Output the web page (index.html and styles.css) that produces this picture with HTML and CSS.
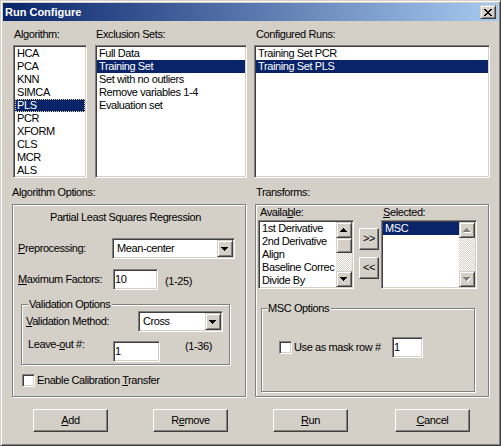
FILE: index.html
```html
<!DOCTYPE html>
<html>
<head>
<meta charset="utf-8">
<title>Run Configure</title>
<link rel="stylesheet" href="styles.css">
</head>
<body>
<div class="window">
  <div class="titlebar">
    <span class="title">Run Configure</span>
    <div class="close raised"><svg width="8" height="7" viewBox="0 0 8 7" shape-rendering="crispEdges"><path fill="#000" d="M0 0h2v1H0z M6 0h2v1H6z M1 1h2v1H1z M5 1h2v1H5z M2 2h4v1H2z M3 3h2v1H3z M2 4h4v1H2z M1 5h2v1H1z M5 5h2v1H5z M0 6h2v1H0z M6 6h2v1H6z"/></svg></div>
  </div>

  <div class="top">
    <div class="col col-alg">
      <div class="lbl">Algorithm:</div>
      <div class="field list">
        <div class="item">HCA</div>
        <div class="item">PCA</div>
        <div class="item">KNN</div>
        <div class="item">SIMCA</div>
        <div class="item sel focus">PLS</div>
        <div class="item">PCR</div>
        <div class="item">XFORM</div>
        <div class="item">CLS</div>
        <div class="item">MCR</div>
        <div class="item">ALS</div>
      </div>
    </div>
    <div class="col col-exc">
      <div class="lbl">Exclusion Sets:</div>
      <div class="field list">
        <div class="item">Full Data</div>
        <div class="item sel">Training Set</div>
        <div class="item">Set with no outliers</div>
        <div class="item">Remove variables 1-4</div>
        <div class="item">Evaluation set</div>
      </div>
    </div>
    <div class="col col-runs">
      <div class="lbl lbl2">Configured Runs:</div>
      <div class="field list">
        <div class="item">Training Set PCR</div>
        <div class="item sel">Training Set PLS</div>
      </div>
    </div>
  </div>

  <div class="mid">
    <div class="side">
      <div class="sec">Algorithm Options:</div>
      <div class="group etched">
        <div class="pls-title">Partial Least Squares Regression</div>
        <div class="frow row-pre">
          <span class="flbl w94"><u>P</u>reprocessing:</span>
          <div class="field combo w123">
            <span class="ctext">Mean-center</span>
            <span class="dd raised"><svg width="14" height="15" viewBox="0 0 14 15" shape-rendering="crispEdges"><path fill="#000" d="M3 6h7v1H3z M4 7h5v1H4z M5 8h3v1H5z M6 9h1v1H6z"/></svg></span>
          </div>
        </div>
        <div class="frow row-max">
          <span class="flbl w95"><u>M</u>aximum Factors:</span>
          <div class="field edit w45">10</div>
          <span class="range1">(1-25)</span>
        </div>
        <div class="frame etched frame-val">
          <span class="legend">Validation Options</span>
          <div class="frow row-vm">
            <span class="flbl w112"><u>V</u>alidation Method:</span>
            <div class="field combo w85">
              <span class="ctext">Cross</span>
              <span class="dd raised"><svg width="14" height="15" viewBox="0 0 14 15" shape-rendering="crispEdges"><path fill="#000" d="M3 6h7v1H3z M4 7h5v1H4z M5 8h3v1H5z M6 9h1v1H6z"/></svg></span>
            </div>
          </div>
          <div class="frow row-lo">
            <span class="flbl w85">Leave-<u>o</u>ut #:</span>
            <div class="field edit w47">1</div>
            <span class="range2">(1-36)</span>
          </div>
        </div>
        <div class="frow check-row">
          <span class="field cb"></span>
          <span class="cb-text">Enable Calibration <u>T</u>ransfer</span>
        </div>
      </div>
    </div>

    <div class="side side-r">
      <div class="sec">Transforms:</div>
      <div class="group etched group-r">
        <div class="tr">
          <div class="tcol">
            <div class="lbl tl">Availa<u>b</u>le:</div>
            <div class="field tlist">
              <div class="items">
                <div class="item">1st Derivative</div>
                <div class="item">2nd Derivative</div>
                <div class="item">Align</div>
                <div class="item">Baseline Correc</div>
                <div class="item">Divide By</div>
              </div>
              <div class="sb">
                <span class="sbtn raised"><svg width="14" height="14" viewBox="0 0 14 14" shape-rendering="crispEdges"><path fill="#000" d="M6 5h1v1H6z M5 6h3v1H5z M4 7h5v1H4z M3 8h7v1H3z"/></svg></span>
                <span class="thumb raised"></span>
                <span class="track"></span>
                <span class="sbtn raised"><svg width="14" height="14" viewBox="0 0 14 14" shape-rendering="crispEdges"><path fill="#000" d="M3 5h7v1H3z M4 6h5v1H4z M5 7h3v1H5z M6 8h1v1H6z"/></svg></span>
              </div>
            </div>
          </div>
          <div class="arrows">
            <span class="pbtn small">&gt;&gt;</span>
            <span class="pbtn small">&lt;&lt;</span>
          </div>
          <div class="tcol tcol-sel">
            <div class="lbl tl"><u>S</u>elected:</div>
            <div class="field tlist">
              <div class="items">
                <div class="item sel">MSC</div>
              </div>
              <div class="sb">
                <span class="sbtn raised"><svg width="14" height="14" viewBox="0 0 14 14" shape-rendering="crispEdges"><path fill="#fff" d="M7 6h1v1H7z M6 7h3v1H6z M5 8h5v1H5z M4 9h7v1H4z"/><path fill="#808080" d="M6 5h1v1H6z M5 6h3v1H5z M4 7h5v1H4z M3 8h7v1H3z"/></svg></span>
                <span class="track"></span>
                <span class="sbtn raised"><svg width="14" height="14" viewBox="0 0 14 14" shape-rendering="crispEdges"><path fill="#fff" d="M4 6h7v1H4z M5 7h5v1H5z M6 8h3v1H6z M7 9h1v1H7z"/><path fill="#808080" d="M3 5h7v1H3z M4 6h5v1H4z M5 7h3v1H5z M6 8h1v1H6z"/></svg></span>
              </div>
            </div>
          </div>
        </div>
        <div class="frame etched frame-msc">
          <span class="legend">MSC Options</span>
          <div class="frow msc-row">
            <span class="field cb"></span>
            <span class="cb-text msc-text">Use as mask row #</span>
            <div class="field edit w31">1</div>
          </div>
        </div>
      </div>
    </div>
  </div>

  <div class="btns">
    <span class="pbtn wide"><u>A</u>dd</span>
    <span class="pbtn wide gap45">R<u>e</u>move</span>
    <span class="pbtn wide gap45"><u>R</u>un</span>
    <span class="pbtn wide gap47"><u>C</u>ancel</span>
  </div>
</div>
</body>
</html>
```

FILE: styles.css
```css
* { box-sizing: border-box; }
html, body { margin: 0; padding: 0; background: #D4D0C8; }
body {
  font-family: "Liberation Sans", Arial, sans-serif;
  font-size: 11px;
  line-height: 13px;
  letter-spacing: -0.4px;
  color: #000;
}
u { text-decoration: underline; }
svg { display: block; }

.window {
  width: 501px;
  height: 446px;
  border: 1px solid;
  border-color: #D4D0C8 #404040 #404040 #D4D0C8;
  box-shadow: inset 1px 1px 0 #fff, inset -1px -1px 0 #808080;
  padding: 2px;
  background: #D4D0C8;
}

.titlebar {
  height: 18px;
  display: flex;
  background: linear-gradient(to right, #0A246A, #A6CAF0);
}
.title {
  color: #fff;
  font-weight: bold;
  letter-spacing: 0;
  line-height: 18px;
  padding-left: 2px;
}
.raised {
  background: #D4D0C8;
  border: 1px solid;
  border-color: #D4D0C8 #404040 #404040 #D4D0C8;
  box-shadow: inset 1px 1px 0 #fff, inset -1px -1px 0 #808080;
}
.close {
  margin: 2px 2px 0 auto;
  width: 16px;
  height: 14px;
  padding: 3px 0 0 3px;
}

.field {
  background: #fff;
  border: 1px solid;
  border-color: #808080 #fff #fff #808080;
  box-shadow: inset 1px 1px 0 #404040, inset -1px -1px 0 #D4D0C8;
}

/* top lists */
.top { display: flex; margin-top: 7px; padding-left: 10px; }
.col-alg { width: 74px; }
.col-exc { width: 152px; margin-left: 8px; }
.col-runs { width: 236px; margin-left: 7px; }
.lbl { height: 13px; padding-left: 1px; white-space: nowrap; }
.lbl2 { padding-left: 2px; }
.list { margin-top: 4px; height: 133px; padding: 1px; overflow: hidden; }
.item { height: 13px; padding-left: 2px; white-space: nowrap; overflow: hidden; }
.sel { background: #0A246A; color: #fff; }
.focus { outline: 1px dotted #F5DB95; outline-offset: -1px; }

/* middle */
.mid { display: flex; margin-top: 8px; padding-left: 9px; }
.side { width: 235px; }
.side-r { margin-left: 8px; }
.sec { height: 13px; white-space: nowrap; }
.side-r .sec { padding-left: 1px; }
.etched {
  border: 1px solid #808080;
  box-shadow: inset 1px 1px 0 #fff, 1px 1px 0 #fff;
}
.group { margin-top: 5px; width: 234px; height: 193px; }

.pls-title { margin-top: 6px; padding-right: 7px; height: 13px; text-align: center; white-space: nowrap; }
.frow { display: flex; align-items: center; }
.flbl { white-space: nowrap; }
.w94 { width: 94px; }
.w95 { width: 95px; }
.w112 { width: 112px; }
.w85 { width: 85px; }
.w123 { width: 123px; }
.w45 { width: 45px; }
.w47 { width: 47px; }
.w31 { width: 31px; }

.combo { height: 21px; display: flex; padding: 1px; }
.combo .ctext { flex: 1; padding-left: 3px; line-height: 17px; white-space: nowrap; }
.dd { width: 16px; height: 17px; }
.edit { height: 21px; padding: 0 0 0 1px; line-height: 19px; }

.row-pre { margin-top: 14px; padding-left: 5px; }
.row-max { margin-top: 10px; padding-left: 5px; }
.range1 { margin-left: 7px; margin-top: 4px; }

.frame { position: relative; }
.legend {
  position: absolute;
  top: -7px;
  height: 13px;
  padding: 0 2px 0 1px;
  background: #D4D0C8;
  white-space: nowrap;
}
.frame-val { margin: 14px 0 0 8px; width: 209px; height: 61px; }
.frame-val .legend { left: 6px; }
.row-vm { margin-top: 6px; padding-left: 4px; }
.row-lo { margin-top: 9px; padding-left: 6px; align-items: flex-start; }
.row-lo .flbl { margin-top: -3px; }
.range2 { margin-left: 25px; margin-top: -1px; }

.check-row { margin: 9px 0 0 9px; }
.cb { display: block; width: 13px; height: 13px; flex: none; }
.cb-text { margin-left: 2px; white-space: nowrap; }

/* transforms */
.tr { display: flex; align-items: flex-start; padding: 1px 0 0 2px; }
.tcol { width: 96px; }
.tl { padding-left: 2px; }
.tlist { margin-top: 1px; height: 69px; padding: 1px; display: flex; }
.tlist .items { flex: 1; min-width: 0; overflow: hidden; }
.sb { width: 16px; display: flex; flex-direction: column; }
.sbtn { display: block; width: 16px; height: 16px; flex: none; }
.thumb { display: block; width: 16px; height: 15px; flex: none; }
.track {
  display: block;
  flex: 1;
  background: repeating-conic-gradient(#fff 0% 25%, #D4D0C8 0% 50%) 0 0 / 2px 2px;
}
.arrows { margin-left: 5px; width: 20px; padding-top: 22px; display: flex; flex-direction: column; gap: 7px; }
.tcol-sel { margin-left: 2px; }

.frame-msc { margin: 19px 0 0 5px; width: 214px; height: 84px; }
.frame-msc .legend { left: 5px; }
.msc-row { margin-top: 28px; padding-left: 17px; }
.msc-text { width: 98px; }

/* push buttons */
.pbtn {
  display: block;
  background: #D4D0C8;
  border: 1px solid;
  border-color: #fff #404040 #404040 #fff;
  box-shadow: inset -1px -1px 0 #808080;
  text-align: center;
  white-space: nowrap;
}
.small { width: 20px; height: 22px; line-height: 19px; }
.wide { width: 75px; height: 23px; line-height: 20px; }
.btns { display: flex; margin-top: 12px; padding-left: 30px; }
.gap45 { margin-left: 45px; }
.gap47 { margin-left: 47px; }
```
